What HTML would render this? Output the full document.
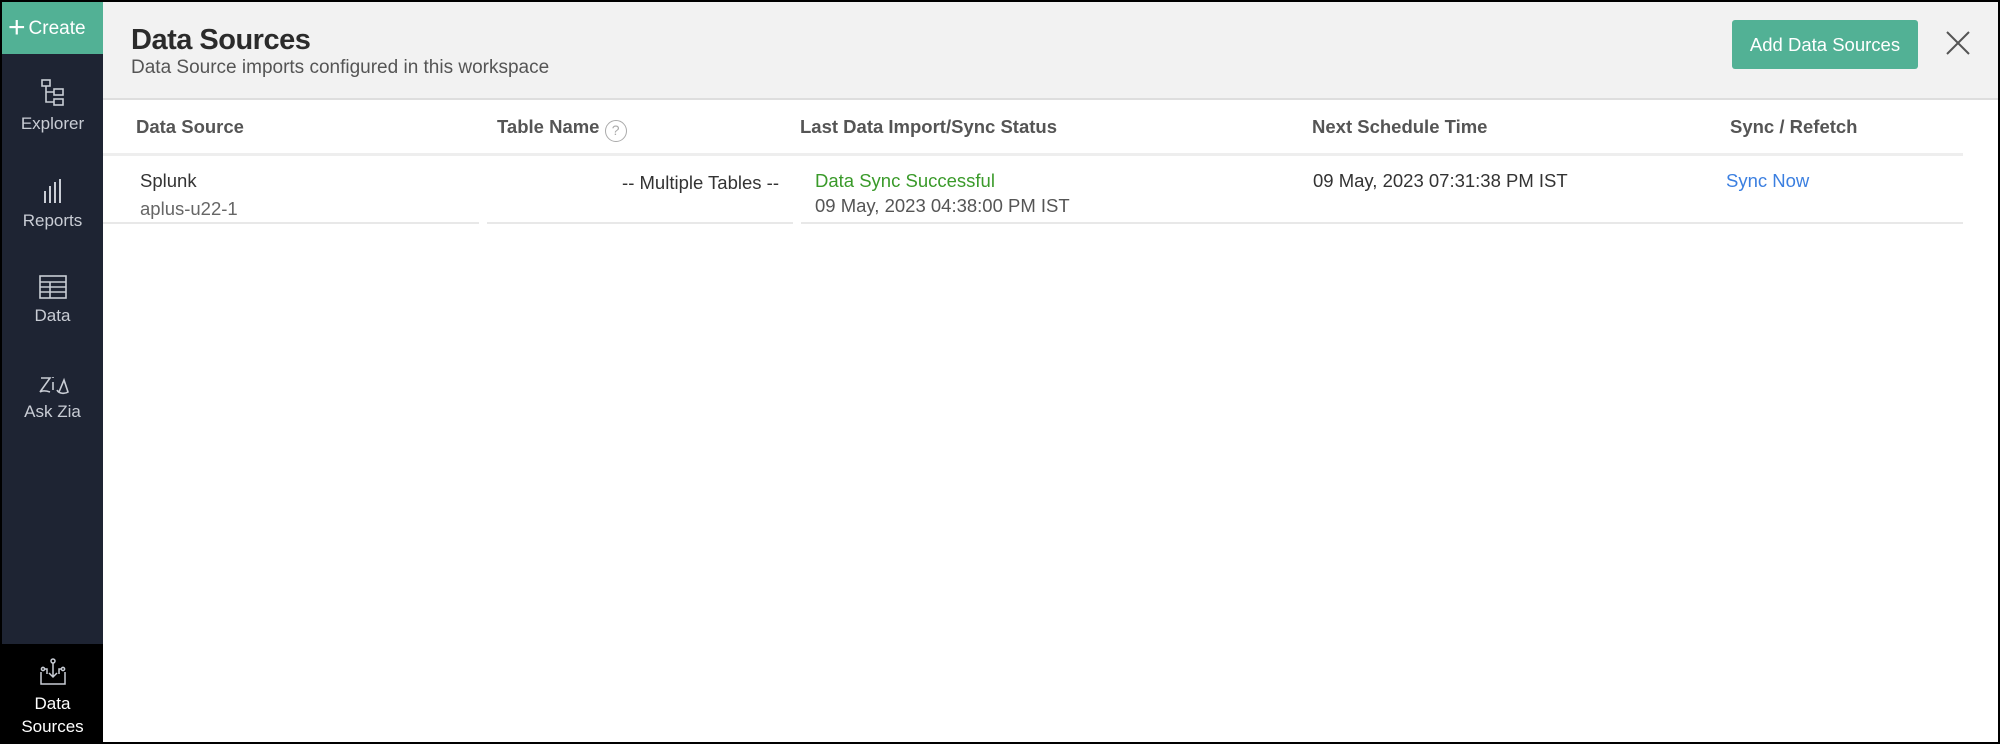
<!DOCTYPE html>
<html><head><meta charset="utf-8"><style>
*{box-sizing:border-box;margin:0;padding:0}
body{width:2000px;height:744px;background:#000;font-family:"Liberation Sans",sans-serif;position:relative;overflow:hidden}
.side{position:absolute;left:2px;top:2px;width:101px;height:740px;background:#1e2433}
.create{position:absolute;left:0;top:0;width:101px;height:52px;background:#52b195;color:#fff;font-size:19px;line-height:52px;padding-left:6px}
.create b{font-weight:normal;font-size:30px;vertical-align:-3px;margin-right:3px}
.item{position:absolute;left:0;width:101px;text-align:center;color:#c9cdd5;font-size:17px}
.item svg{display:block;margin:0 auto 6px}
.active{position:absolute;left:2px;top:644px;width:101px;height:98px;background:#000}
.main{position:absolute;left:103px;top:2px;width:1895px;height:740px;background:#fff}
.head{position:absolute;left:0;top:0;width:1895px;height:98px;background:#f2f2f2;border-bottom:2px solid #dedede}
h1{position:absolute;left:28px;top:22px;font-size:29px;font-weight:bold;color:#2b2b2b;letter-spacing:-0.5px}
.sub{position:absolute;left:28px;top:55px;font-size:19px;color:#555}
.btn{position:absolute;left:1629px;top:18px;width:186px;height:49px;background:#52b195;color:#fff;border-radius:3px;font-size:18.5px;text-align:center;line-height:49px}
.x{position:absolute;left:1840px;top:26px}
.th{position:absolute;top:114px;font-size:18.5px;color:#555;font-weight:bold}
.hline{position:absolute;top:151px;left:0;width:1860px;height:3px;background:#eee}
.td{position:absolute;font-size:18.5px;color:#333}
.rl{position:absolute;top:220px;height:2px;background:#e8e8e8}
.q{display:inline-block;width:22px;height:22px;border:1.5px solid #aaa;border-radius:50%;font-size:14px;color:#aaa;text-align:center;line-height:19px;font-weight:normal;vertical-align:-2px}
</style></head><body>
<div class="side">
<div class="create"><b>+</b>Create</div>
<div class="item" style="top:76px"><svg width="28" height="30" viewBox="0 0 28 30" fill="none" stroke="#c9cdd5" stroke-width="1.6"><rect x="3" y="2" width="8" height="6"/><rect x="15" y="11" width="9" height="6"/><rect x="15" y="21" width="9" height="6"/><path d="M7 8v16h8M7 14h8"/></svg>Explorer</div>
<div class="item" style="top:175px"><svg width="28" height="28" viewBox="0 0 28 28" stroke="#c9cdd5" stroke-width="2"><path d="M6 26V14M11 26V9M16 26V5M21 26V2"/></svg>Reports</div>
<div class="item" style="top:272px"><svg width="30" height="26" viewBox="0 0 30 26" fill="none" stroke="#c9cdd5" stroke-width="1.6"><rect x="2" y="2" width="26" height="22"/><path d="M2 8h26M2 13h26M2 18h26M12 8v16"/></svg>Data</div>
<div class="item" style="top:368px"><svg width="32" height="26" viewBox="0 0 32 26" fill="none" stroke="#c9cdd5" stroke-width="1.6"><path d="M4 8h9L3 22c3-2 7-1 10 0M16 12v8M16 7v1M22 22l5-12 4 12c-3 2-9 2-11-2"/></svg>Ask Zia</div>
</div>
<div class="active"></div>
<div class="item" style="top:658px;left:2px;color:#fff"><svg width="30" height="28" viewBox="0 0 30 28" fill="none" stroke="#c9cdd5" stroke-width="1.5"><circle cx="15" cy="3" r="2"/><path d="M15 5v14M11 15l4 4 4-4M3 14v12h24V14"/><circle cx="5" cy="11" r="1.6"/><path d="M7 11h2v5"/><circle cx="25" cy="11" r="1.6"/><path d="M23 11h-2v5"/></svg><span style="line-height:23px">Data<br>Sources</span></div>
<div class="main">
<div class="head">
<h1>Data Sources</h1>
<div class="sub">Data Source imports configured in this workspace</div>
<div class="btn">Add Data Sources</div>
<svg class="x" width="30" height="30" viewBox="0 0 30 30" stroke="#555" stroke-width="2"><path d="M4 4l22 22M26 4L4 26"/></svg>
</div>
<div class="th" style="left:33px">Data Source</div>
<div class="th" style="left:394px">Table Name <span class="q">?</span></div>
<div class="th" style="left:697px">Last Data Import/Sync Status</div>
<div class="th" style="left:1209px">Next Schedule Time</div>
<div class="th" style="left:1627px">Sync / Refetch</div>
<div class="hline"></div>
<div class="td" style="left:37px;top:168px">Splunk</div>
<div class="td" style="left:37px;top:196px;color:#666">aplus-u22-1</div>
<div class="td" style="left:400px;top:170px;width:276px;text-align:right">-- Multiple Tables --</div>
<div class="td" style="left:712px;top:168px;color:#3a9a2a">Data Sync Successful</div>
<div class="td" style="left:712px;top:193px;color:#555">09 May, 2023 04:38:00 PM IST</div>
<div class="td" style="left:1210px;top:168px">09 May, 2023 07:31:38 PM IST</div>
<div class="td" style="left:1623px;top:168px;color:#3b7fe0">Sync Now</div>
<div class="rl" style="left:0;width:376px"></div>
<div class="rl" style="left:384px;width:306px"></div>
<div class="rl" style="left:698px;width:1162px"></div>
</div>
</body></html>
